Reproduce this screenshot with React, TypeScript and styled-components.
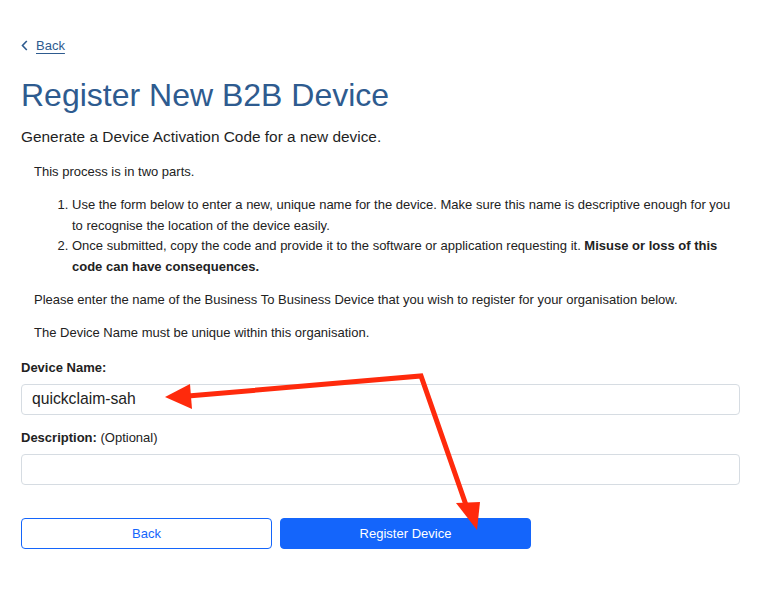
import styled, { createGlobalStyle } from "styled-components";

const GlobalStyle = createGlobalStyle`
  body {
    margin: 0;
    background: #fff;
    font-family: "Liberation Sans", Arial, sans-serif;
    color: #222;
  }
`;

const App = () => {
  return (
    <>
      <GlobalStyle />
      <Page>
        <BackLink href="#">
          <svg width="7" height="11" viewBox="0 0 7 11">
            <path d="M5.8 1 L1.5 5.5 L5.8 10" fill="none" stroke="#2e5b8f" strokeWidth="1.6" />
          </svg>
          <span>Back</span>
        </BackLink>
        <Title>Register New B2B Device</Title>
        <Lead>Generate a Device Activation Code for a new device.</Lead>
        <Body>
          <Para>This process is in two parts.</Para>
          <Steps>
            <li>
              Use the form below to enter a new, unique name for the device. Make sure this
              name is descriptive enough for you to recognise the location of the device
              easily.
            </li>
            <li>
              Once submitted, copy the code and provide it to the software or application
              requesting it. <strong>Misuse or loss of this code can have consequences.</strong>
            </li>
          </Steps>
          <Para>
            Please enter the name of the Business To Business Device that you wish to register
            for your organisation below.
          </Para>
          <Para>The Device Name must be unique within this organisation.</Para>
        </Body>
        <Field>
          <Label htmlFor="name">Device Name:</Label>
          <Input id="name" defaultValue="quickclaim-sah" />
        </Field>
        <Field>
          <Label htmlFor="desc">
            Description: <Optional>(Optional)</Optional>
          </Label>
          <Input id="desc" />
        </Field>
        <Actions>
          <Button $variant="outline">Back</Button>
          <Button $variant="primary">Register Device</Button>
        </Actions>
      </Page>
      <Annotation width="761" height="603" viewBox="0 0 761 603">
        <polyline
          points="188,396 421,376 466,505"
          fill="none"
          stroke="#ff2a0c"
          strokeWidth="5"
          strokeLinejoin="miter"
        />
        <polygon points="165,397 190,384 192,409" fill="#ff2a0c" />
        <polygon points="477,530 456,503 480,502" fill="#ff2a0c" />
      </Annotation>
    </>
  );
};

const Page = styled.div`
  width: 719px;
  padding: 37px 21px 40px;
`;

const BackLink = styled.a`
  display: inline-flex;
  align-items: center;
  gap: 8px;
  color: #2e5b8f;
  font-size: 13px;
  text-decoration: none;
  & > span {
    text-decoration: underline;
    text-underline-offset: 3px;
  }
`;

const Title = styled.h1`
  margin: 20px 0 0;
  font-size: 32px;
  font-weight: 400;
  line-height: 40px;
  color: #2e5b8f;
`;

const Lead = styled.p`
  margin: 11px 0 0;
  font-size: 15.4px;
  line-height: 22px;
  color: #1f1f1f;
`;

const Body = styled.div`
  padding: 14px 0 0 13px;
  font-size: 13px;
  line-height: 20.8px;
  color: #222;
`;

const Para = styled.p`
  margin: 0 0 12px;
`;

const Steps = styled.ol`
  margin: 0 0 12px;
  padding-left: 38px;
  & strong {
    font-weight: 700;
  }
`;

const Field = styled.div`
  display: flex;
  flex-direction: column;
  gap: 9px;
  margin-top: 16px;
  & + & {
    margin-top: 15px;
  }
`;

const Label = styled.label`
  font-size: 13px;
  font-weight: 700;
  color: #222;
`;

const Optional = styled.span`
  font-weight: 400;
`;

const Input = styled.input`
  box-sizing: border-box;
  width: 100%;
  height: 31px;
  padding: 0 10px;
  border: 1px solid #d6dce2;
  border-radius: 4px;
  font-family: inherit;
  font-size: 15.7px;
  color: #222;
  outline: none;
`;

const Actions = styled.div`
  display: flex;
  gap: 8px;
  margin-top: 33px;
`;

const Button = styled.button<{ $variant: "outline" | "primary" }>`
  width: 251px;
  height: 31px;
  border-radius: 4px;
  font-family: inherit;
  font-size: 13px;
  border: 1px solid #1465fb;
  background: ${({ $variant }) => ($variant === "primary" ? "#1465fb" : "#fff")};
  color: ${({ $variant }) => ($variant === "primary" ? "#fff" : "#1465fb")};
`;

const Annotation = styled.svg`
  position: absolute;
  top: 0;
  left: 0;
  pointer-events: none;
`;

export default App;
